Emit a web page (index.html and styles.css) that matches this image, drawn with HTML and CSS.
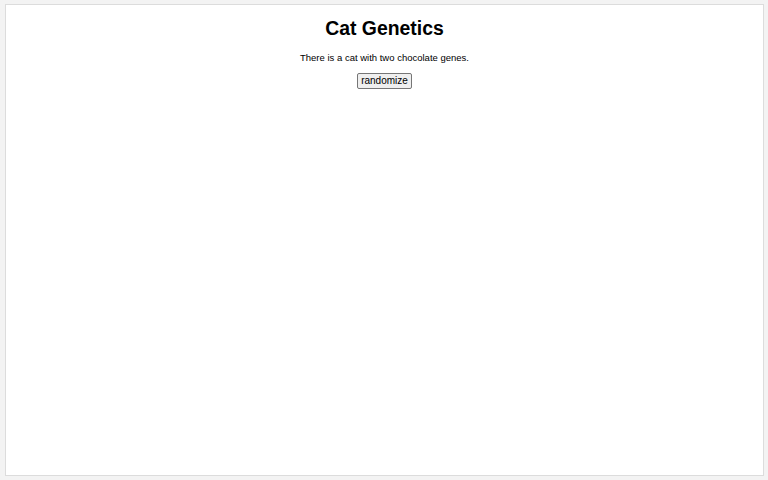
FILE: index.html
```html
<!DOCTYPE html>
<html>
<head>
<meta charset="utf-8">
<link rel="stylesheet" href="styles.css">
</head>
<body>
<div class="panel">
  <h1 class="title">Cat Genetics</h1>
  <p class="desc">There is a cat with two chocolate genes.</p>
  <button class="btn">randomize</button>
</div>
</body>
</html>
```
FILE: styles.css
```css
html, body { margin: 0; height: 100%; }
body {
  background: #f3f3f3;
  padding: 4px 4px 4px 5px;
  box-sizing: border-box;
  font-family: "Liberation Sans", Arial, sans-serif;
}
.panel {
  background: #fff;
  border: 1px solid #dcdcdc;
  height: 100%;
  box-sizing: border-box;
  display: flex;
  flex-direction: column;
  align-items: center;
}
.title {
  font-size: 19.4px;
  font-weight: bold;
  margin: 12px 0 0;
  line-height: 22px;
}
.desc {
  font-size: 9.5px;
  margin: 13px 0 0;
  line-height: 12px;
}
.btn {
  margin-top: 9px;
  font-family: "Liberation Sans", Arial, sans-serif;
  font-size: 10px;
  padding: 1px 3px 2px;
  line-height: 11px;
  background: #efefef;
  border: 1px solid #767676;
  border-radius: 2px;
  color: #000;
}
```
